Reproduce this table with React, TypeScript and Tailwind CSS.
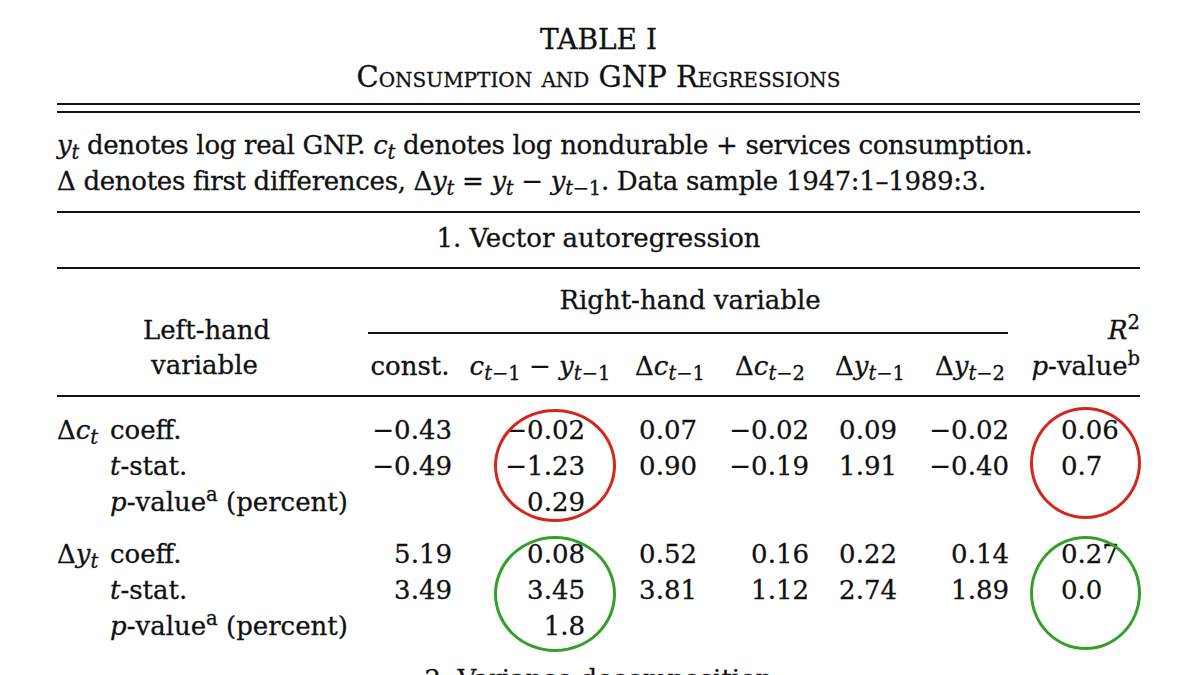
import React from 'react';

type Row = { label: React.ReactNode; values: string[] };

const Lag = ({ n }: { n?: string }) => (
  <sub>
    <i>t</i>
    {n ? `−${n}` : ''}
  </sub>
);

const PValue = ({ mark }: { mark: string }) => (
  <>
    <i>p</i>-value<sup>{mark}</sup>
  </>
);

const groups: { lhs: React.ReactNode; rows: Row[] }[] = [
  {
    lhs: (
      <>
        Δ<i>c</i>
        <Lag />
      </>
    ),
    rows: [
      { label: 'coeff.', values: ['−0.43', '−0.02', '0.07', '−0.02', '0.09', '−0.02', '0.06'] },
      { label: <><i>t</i>-stat.</>, values: ['−0.49', '−1.23', '0.90', '−0.19', '1.91', '−0.40', '0.7'] },
      { label: <><PValue mark="a" /> (percent)</>, values: ['', '0.29', '', '', '', '', ''] },
    ],
  },
  {
    lhs: (
      <>
        Δ<i>y</i>
        <Lag />
      </>
    ),
    rows: [
      { label: 'coeff.', values: ['5.19', '0.08', '0.52', '0.16', '0.22', '0.14', '0.27'] },
      { label: <><i>t</i>-stat.</>, values: ['3.49', '3.45', '3.81', '1.12', '2.74', '1.89', '0.0'] },
      { label: <><PValue mark="a" /> (percent)</>, values: ['', '1.8', '', '', '', '', ''] },
    ],
  },
];

// right padding per numeric column so the figures line up as in the scan
const numPad = ['pr-[8px]', 'pr-[35px]', 'pr-[23px]', 'pr-[11px]', 'pr-[23px]', 'pr-[11px]'];

const cols = 'grid grid-cols-[303px_100px_160px_100px_100px_100px_100px_120px]';

const Rule = ({ className = '' }: { className?: string }) => <div className={`h-[2px] bg-[#151515] ${className}`} />;

export default function App() {
  return (
    <div className="relative w-[1200px] h-[675px] overflow-hidden bg-white text-[#111] font-['DejaVu_Serif',serif] text-[26px] leading-[36px] [-webkit-text-stroke:0.3px_#111]">
      <div className="pl-[57px] pr-[60px]">
        {/* Title */}
        <div className="mt-[21px] text-center text-[28px] leading-[38px]">TABLE I</div>
        <div className="text-center text-[29px] [font-variant-caps:small-caps] leading-[36px]">Consumption and GNP Regressions</div>

        <Rule className="mt-[8px]" />
        <Rule className="mt-[6px]" />

        {/* Notes */}
        <div className="mt-[14px] tracking-[-0.3px]">
          <p>
            <i>y</i>
            <Lag /> denotes log real GNP. <i>c</i>
            <Lag /> denotes log nondurable + services consumption.
          </p>
          <p>
            Δ denotes first differences, Δ<i>y</i>
            <Lag /> = <i>y</i>
            <Lag /> − <i>y</i>
            <Lag n="1" />. Data sample 1947:1–1989:3.
          </p>
        </div>

        <Rule className="mt-[12px]" />
        <div className="mt-[7px] text-center">1. Vector autoregression</div>
        <Rule className="mt-[11px]" />

        {/* Column headings */}
        <div className={`${cols} mt-[13px]`}>
          <div />
          <div className="col-span-6 text-center">Right-hand variable</div>
          <div />

          <div className="text-center pr-[4px] leading-[30px] mt-[-3px]">Left-hand</div>
          <div className="col-span-6 flex items-center pl-[8px] pr-[12px] h-[30px]">
            <Rule className="w-full h-[1.5px]" />
          </div>
          <div className="text-right leading-[30px] mt-[-3px]">
            <i>R</i>
            <sup>2</sup>
          </div>

          <div className="text-center pr-[8px] mt-[-1px]">variable</div>
          <div className="text-center">const.</div>
          <div className="text-center">
            <i>c</i>
            <Lag n="1" /> − <i>y</i>
            <Lag n="1" />
          </div>
          <div className="text-center">
            Δ<i>c</i>
            <Lag n="1" />
          </div>
          <div className="text-center">
            Δ<i>c</i>
            <Lag n="2" />
          </div>
          <div className="text-center">
            Δ<i>y</i>
            <Lag n="1" />
          </div>
          <div className="text-center">
            Δ<i>y</i>
            <Lag n="2" />
          </div>
          <div className="text-right">
            <PValue mark="b" />
          </div>
        </div>

        <Rule className="mt-[11px]" />

        {/* Body */}
        {groups.map((g, gi) => (
          <div key={gi} className={gi === 0 ? 'mt-[15px]' : 'mt-[16px]'}>
            {g.rows.map((r, ri) => (
              <div key={ri} className={cols}>
                <div className="flex">
                  <span className="w-[53px] shrink-0">{ri === 0 ? g.lhs : ''}</span>
                  <span className="whitespace-nowrap">{r.label}</span>
                </div>
                {r.values.slice(0, 6).map((v, vi) => (
                  <div key={vi} className={`text-right ${numPad[vi]}`}>
                    {v}
                  </div>
                ))}
                <div className="pl-[41px]">{r.values[6]}</div>
              </div>
            ))}
          </div>
        ))}

        <div className="mt-[17px] text-center">2. Variance decomposition</div>
      </div>

      {/* Hand-drawn highlight circles */}
      <div className="absolute left-[494px] top-[409px] w-[122px] h-[113px] rounded-[50%] border-[3px] border-[#d3261c]" />
      <div className="absolute left-[1030px] top-[407px] w-[111px] h-[112px] rounded-[50%] border-[3px] border-[#d3261c]" />
      <div className="absolute left-[494px] top-[536px] w-[122px] h-[116px] rounded-[50%] border-[3px] border-[#34a02c]" />
      <div className="absolute left-[1030px] top-[536px] w-[111px] h-[114px] rounded-[50%] border-[3px] border-[#34a02c]" />
    </div>
  );
}
